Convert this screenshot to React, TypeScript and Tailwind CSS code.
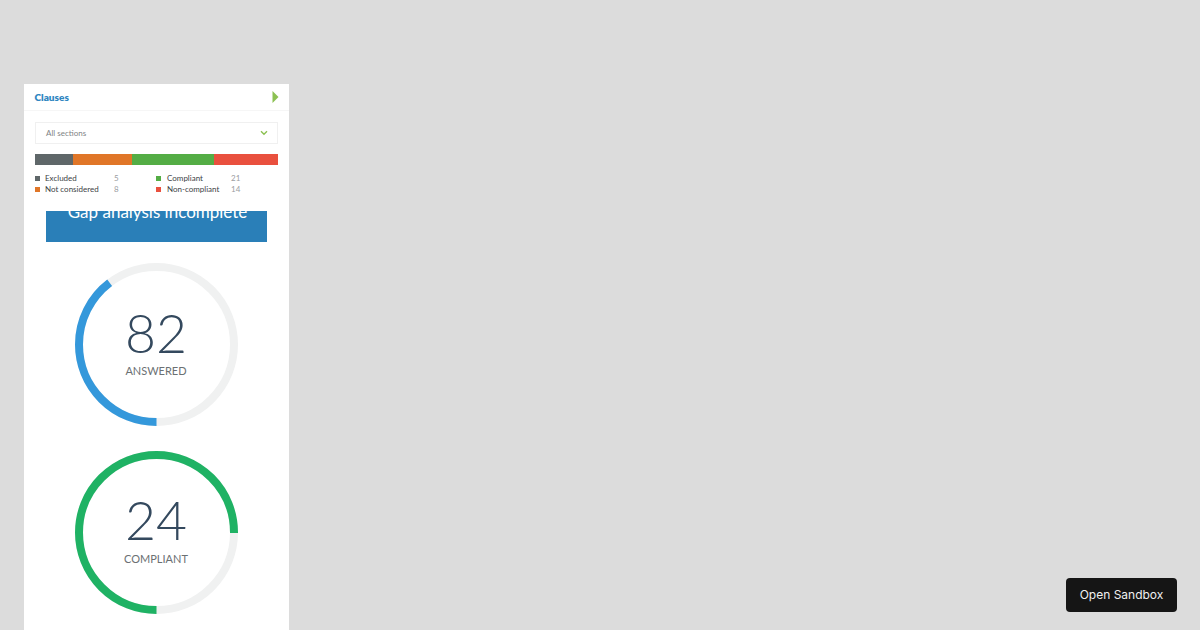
const lato = "font-['Lato','Liberation_Sans',sans-serif]";

function Ring({ value, label, color, fraction, mt, numberMt, labelClass }: { value: string; label: string; color: string; fraction: number; mt: string; numberMt: string; labelClass: string }) {
  const r = 77.5;
  const c = 2 * Math.PI * r;
  return (
    <div className={`relative ml-[50.5px] h-[163px] w-[163px] shrink-0 ${mt}`}>
      <svg width="163" height="163" viewBox="0 0 163 163" className="block">
        <circle cx="81.5" cy="81.5" r={r} fill="none" stroke="#f0f1f1" strokeWidth="8" />
        <circle
          cx="81.5"
          cy="81.5"
          r={r}
          fill="none"
          stroke={color}
          strokeWidth="8"
          strokeDasharray={`${c * fraction} ${c}`}
          transform="rotate(90 81.5 81.5)"
        />
      </svg>
      <div className="absolute inset-0 flex flex-col items-center">
        <span className={`h-[52px] text-[53.5px] leading-[52px] font-light text-[#34495e] ${numberMt}`}>{value}</span>
        <span className={`text-[#6b7073] ${labelClass}`}>{label}</span>
      </div>
    </div>
  );
}

function LegendRow({ color, label, count, labelClass }: { color: string; label: string; count: string; labelClass: string }) {
  return (
    <div className="flex h-[11px] items-center">
      <span className="h-[5px] w-[5px] shrink-0" style={{ backgroundColor: color }} />
      <span className={`text-[8px] leading-[11px] whitespace-nowrap text-[#3d4245] ${labelClass}`}>{label}</span>
      <span className="text-[8px] leading-[11px] text-[#9a9d9f]">{count}</span>
    </div>
  );
}

export default function App() {
  return (
    <div className={`relative h-[630px] w-[1200px] overflow-hidden bg-[#dcdcdc] pt-[84px] pl-[24px] ${lato}`}>
      <div className="flex h-[546px] w-[265px] flex-col overflow-hidden bg-white">
        <div className="flex h-[27px] shrink-0 items-center justify-between border-b border-[#f6f6f6] pr-[10px] pl-[10.5px]">
          <span className="text-[10px] font-extrabold text-[#2f86c1]">Clauses</span>
          <svg width="7" height="12" viewBox="0 0 7 12"><path d="M0.5 0 L6.5 6 L0.5 12 Z" fill="#8cc152" /></svg>
        </div>
        <div className="mx-[11px] mt-[11px] flex h-[22px] shrink-0 items-center justify-between border border-[#f0f0f0] pr-[9px] pl-[10px]">
          <span className="-mt-[1px] text-[8px] text-[#808385]">All sections</span>
          <svg width="8" height="6" viewBox="0 0 8 6"><path d="M1 1.2 L4 4.2 L7 1.2" fill="none" stroke="#8cc152" strokeWidth="1.4" /></svg>
        </div>
        <div className="mx-[11px] mt-[10px] flex h-[11px] w-[243px] shrink-0">
          <div className="w-[38px] bg-[#5f6769]" />
          <div className="w-[59px] bg-[#e07628]" />
          <div className="w-[82px] bg-[#54ad45]" />
          <div className="w-[64px] bg-[#e9503e]" />
        </div>
        <div className="mx-[11px] mt-[8px] grid w-[243px] shrink-0 grid-cols-[121px_122px]">
          <LegendRow color="#5f6769" label="Excluded" count="5" labelClass="ml-[5px] w-[69px]" />
          <LegendRow color="#54ad45" label="Compliant" count="21" labelClass="ml-[6px] w-[64px]" />
          <LegendRow color="#e07628" label="Not considered" count="8" labelClass="ml-[5px] w-[69px]" />
          <LegendRow color="#e9503e" label="Non-compliant" count="14" labelClass="ml-[6px] w-[64px]" />
        </div>
        <div className="mx-[22px] mt-[16px] flex h-[31px] w-[221px] shrink-0 justify-center overflow-hidden bg-[#2a7fb8] pl-[2px]">
          <span className="-mt-[10px] text-[17px] leading-[22px] whitespace-nowrap text-white">Gap analysis incomplete</span>
        </div>
        <Ring value="82" label="ANSWERED" color="#3498db" fraction={0.396} mt="mt-[21px]" numberMt="mt-[43px]" labelClass="mt-[4.5px] text-[11px] leading-[16px]" />
        <Ring value="24" label="COMPLIANT" color="#1fb264" fraction={0.75} mt="mt-[25px]" numberMt="mt-[42px]" labelClass="mt-[5.5px] text-[11px] leading-[16px]" />
      </div>
      <button className="absolute top-[578px] left-[1066px] flex h-[34px] w-[111px] items-center justify-center rounded-[4px] bg-[#151515] font-['Inter',sans-serif] text-[12px] text-[#f0f0f0]">
        Open Sandbox
      </button>
    </div>
  );
}
